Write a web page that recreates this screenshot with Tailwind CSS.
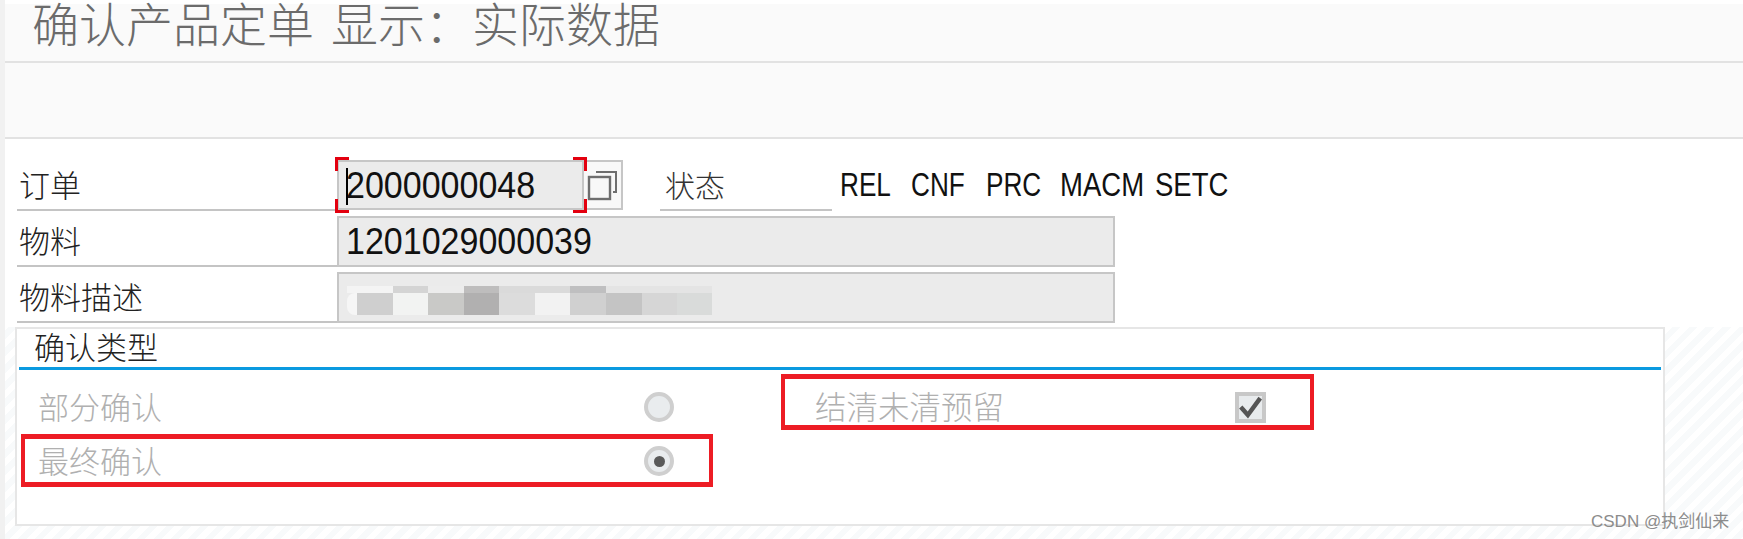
<!DOCTYPE html>
<html lang="zh-CN">
<head>
    <meta charset="UTF-8">
    <title>确认产品定单 显示&#xFF1A;实际数据</title>
    <script src="https://cdn.jsdelivr.net/npm/@tailwindcss/browser@4"></script>
</head>
<body class="bg-white font-['Liberation_Sans','Noto_Sans_CJK_SC',sans-serif] text-black overflow-hidden">
    <div class="relative flex h-[539px] w-[1743px] overflow-hidden">
        <!-- left gutter -->
        <div class="w-[5px] shrink-0 bg-[#f1f1f1]"></div>

        <div class="flex-1 flex flex-col bg-[repeating-linear-gradient(135deg,#ffffff_0px,#ffffff_6px,#f8fafb_6px,#f8fafb_12px)]">
            <!-- title -->
            <div class="h-[4px] bg-white"></div>
            <div class="h-[59px] bg-[#fafafa] border-b-2 border-[#e2e2e2] pl-[27px] text-[47px] leading-[44px] font-light text-[#6b6b6b] whitespace-nowrap [word-spacing:4px]">确认产品定单 显示&#xFF1A;实际数据</div>
            <!-- toolbar -->
            <div class="h-[76px] bg-[#fafafa] border-b-2 border-[#e2e2e2]"></div>

            <!-- header fields -->
            <div class="bg-white pt-[21px] pb-[5px] pl-[12px] h-[188px] flex flex-col gap-[5px]">
                <div class="flex h-[51px]">
                    <div class="w-[320px] border-b-2 border-[#c4c4c4] pl-[2px] pt-[7px] text-[31px] leading-[40px] font-light text-[#222]">订单</div>
                    <div class="relative w-[247px] h-[50px] border-2 border-[#c6c6c6] bg-[#ebebeb] pl-[7px] text-[36px] leading-[48px] text-[#111]">
                        <span class="inline-block scale-x-[0.945] origin-left">2000000048</span>
                        <span class="absolute left-[7px] top-[6px] h-[37px] w-[2px] bg-black"></span>
                        <span class="absolute -left-[4px] -top-[5px] w-[14px] h-[14px] border-l-[3px] border-t-[3px] border-[#e3000f]"></span>
                        <span class="absolute -right-[5px] -top-[5px] w-[14px] h-[14px] border-r-[3px] border-t-[3px] border-[#e3000f]"></span>
                        <span class="absolute -left-[4px] -bottom-[5px] w-[14px] h-[14px] border-l-[3px] border-b-[3px] border-[#e3000f]"></span>
                        <span class="absolute -right-[5px] -bottom-[5px] w-[14px] h-[14px] border-r-[3px] border-b-[3px] border-[#e3000f]"></span>
                    </div>
                    <button class="w-[39px] h-[50px] border-2 border-l-0 border-[#c6c6c6] bg-[#f8f8f8] flex items-center justify-center">
                        <svg width="32" height="32" viewBox="0 0 32 32" fill="none" stroke="#6e6e6e" stroke-width="2">
                            <rect x="2" y="8" width="21" height="22" stroke-width="2.4"/>
                            <path d="M9 3H29V23H26"/>
                        </svg>
                    </button>
                    <div class="ml-[37px] w-[172px] h-[51px] border-b-2 border-[#c4c4c4] pl-[5px] pt-[7px] text-[30px] leading-[40px] font-light text-[#333]">状态</div>
                    <div class="ml-[8px] flex text-[34px] leading-[49px] text-[#111]">
                        <span class="w-[71px] scale-x-[0.77] origin-left">REL</span>
                        <span class="w-[75px] scale-x-[0.77] origin-left">CNF</span>
                        <span class="w-[74px] scale-x-[0.77] origin-left">PRC</span>
                        <span class="w-[95px] scale-x-[0.81] origin-left">MACM</span>
                        <span class="w-[80px] scale-x-[0.81] origin-left">SETC</span>
                    </div>
                </div>
                <div class="flex h-[51px]">
                    <div class="w-[320px] border-b-2 border-[#c4c4c4] pl-[2px] pt-[7px] text-[31px] leading-[40px] font-light text-[#222]">物料</div>
                    <div class="w-[778px] h-[51px] border-2 border-[#c6c6c6] bg-[#ebebeb] pl-[7px] text-[36px] leading-[48px] text-[#111]">
                        <span class="inline-block scale-x-[0.945] origin-left">1201029000039</span>
                    </div>
                </div>
                <div class="flex h-[51px]">
                    <div class="w-[320px] border-b-2 border-[#c4c4c4] pl-[2px] pt-[7px] text-[31px] leading-[40px] font-light text-[#222]">物料描述</div>
                    <div class="w-[778px] h-[51px] border-2 border-[#c6c6c6] bg-[#ebebeb] pl-[8px] pt-[12px]">
                        <!-- blurred description -->
                        <div class="flex h-[7px] w-[365px]">
                            <i class="w-[46px] bg-[#f4f4f4]"></i><i class="w-[35px] bg-[#d4d4d4]"></i><i class="w-[36px] bg-[#ececec]"></i><i class="w-[35px] bg-[#bebdbd]"></i><i class="w-[71px] bg-[#dadada]"></i><i class="w-[36px] bg-[#bfbfc0]"></i><i class="w-[106px] bg-[#e4e4e4]"></i>
                        </div>
                        <div class="flex h-[22px] w-[365px]">
                            <i class="w-[10px] bg-[#f6f6f6] rounded-l-lg"></i><i class="w-[36px] bg-[#cfcfcf]"></i><i class="w-[35px] bg-[#f2f3f2]"></i><i class="w-[36px] bg-[#c9c9c7]"></i><i class="w-[35px] bg-[#b1b0b0]"></i><i class="w-[36px] bg-[#dcdcdc]"></i><i class="w-[35px] bg-[#f2f2f2]"></i><i class="w-[36px] bg-[#d0d0d0]"></i><i class="w-[36px] bg-[#c4c4c4]"></i><i class="w-[35px] bg-[#d6d6d6]"></i><i class="w-[35px] bg-[#d9dbda]"></i>
                        </div>
                    </div>
                </div>
            </div>

            <!-- 确认类型 group -->
            <div class="relative ml-[10px] w-[1650px] h-[199px] border-2 border-[#e6e6e6] bg-white">
                <div class="mx-[2px] h-[41px] border-b-[3px] border-[#0a9ae0] pl-[15px] text-[31px] leading-[40px] font-light text-[#222]">确认类型</div>
                <div class="flex h-[54px] items-center mt-[10px]">
                    <div class="w-[627px] pl-[21px] text-[31px] leading-[54px] pt-[3px] font-light text-[#b0b0b0]">部分确认</div>
                    <span class="w-[30px] h-[30px] rounded-full border-[4px] border-[#cfcfcf] bg-[#e9ecee]"></span>
                    <div class="ml-[141px] w-[420px] text-[31.5px] leading-[54px] pt-[1px] font-light text-[#b0b0b0]">结清未清预留</div>
                    <span class="w-[31px] h-[31px] border-[4px] border-[#c8c8c8] bg-[#e8ebed] flex items-center justify-center">
                        <svg width="26" height="26" viewBox="0 0 26 26" fill="none" stroke="#555" stroke-width="5">
                            <path d="M2 13L10 22L24 3"/>
                        </svg>
                    </span>
                </div>
                <div class="flex h-[54px] items-center">
                    <div class="w-[627px] pl-[21px] text-[31px] leading-[54px] pt-[3px] font-light text-[#b0b0b0]">最终确认</div>
                    <span class="w-[30px] h-[30px] rounded-full border-[4px] border-[#cfcfcf] bg-[#e9ecee] flex items-center justify-center">
                        <span class="w-[11px] h-[11px] rounded-full bg-[#5a5a5a]"></span>
                    </span>
                </div>
                <!-- red markup boxes -->
                <div class="absolute left-[4px] top-[105px] w-[692px] h-[53px] border-x-[4px] border-y-[5px] border-[#ed1c24]"></div>
                <div class="absolute left-[764px] top-[45px] w-[533px] h-[56px] border-x-[4px] border-y-[5px] border-[#ed1c24]"></div>
            </div>
        </div>

        <!-- watermark -->
        <div class="absolute left-[1591px] top-[511px] text-[17px] leading-[22px] text-[#8c8c8c] whitespace-nowrap">CSDN @执剑仙来</div>
    </div>
</body>
</html>
